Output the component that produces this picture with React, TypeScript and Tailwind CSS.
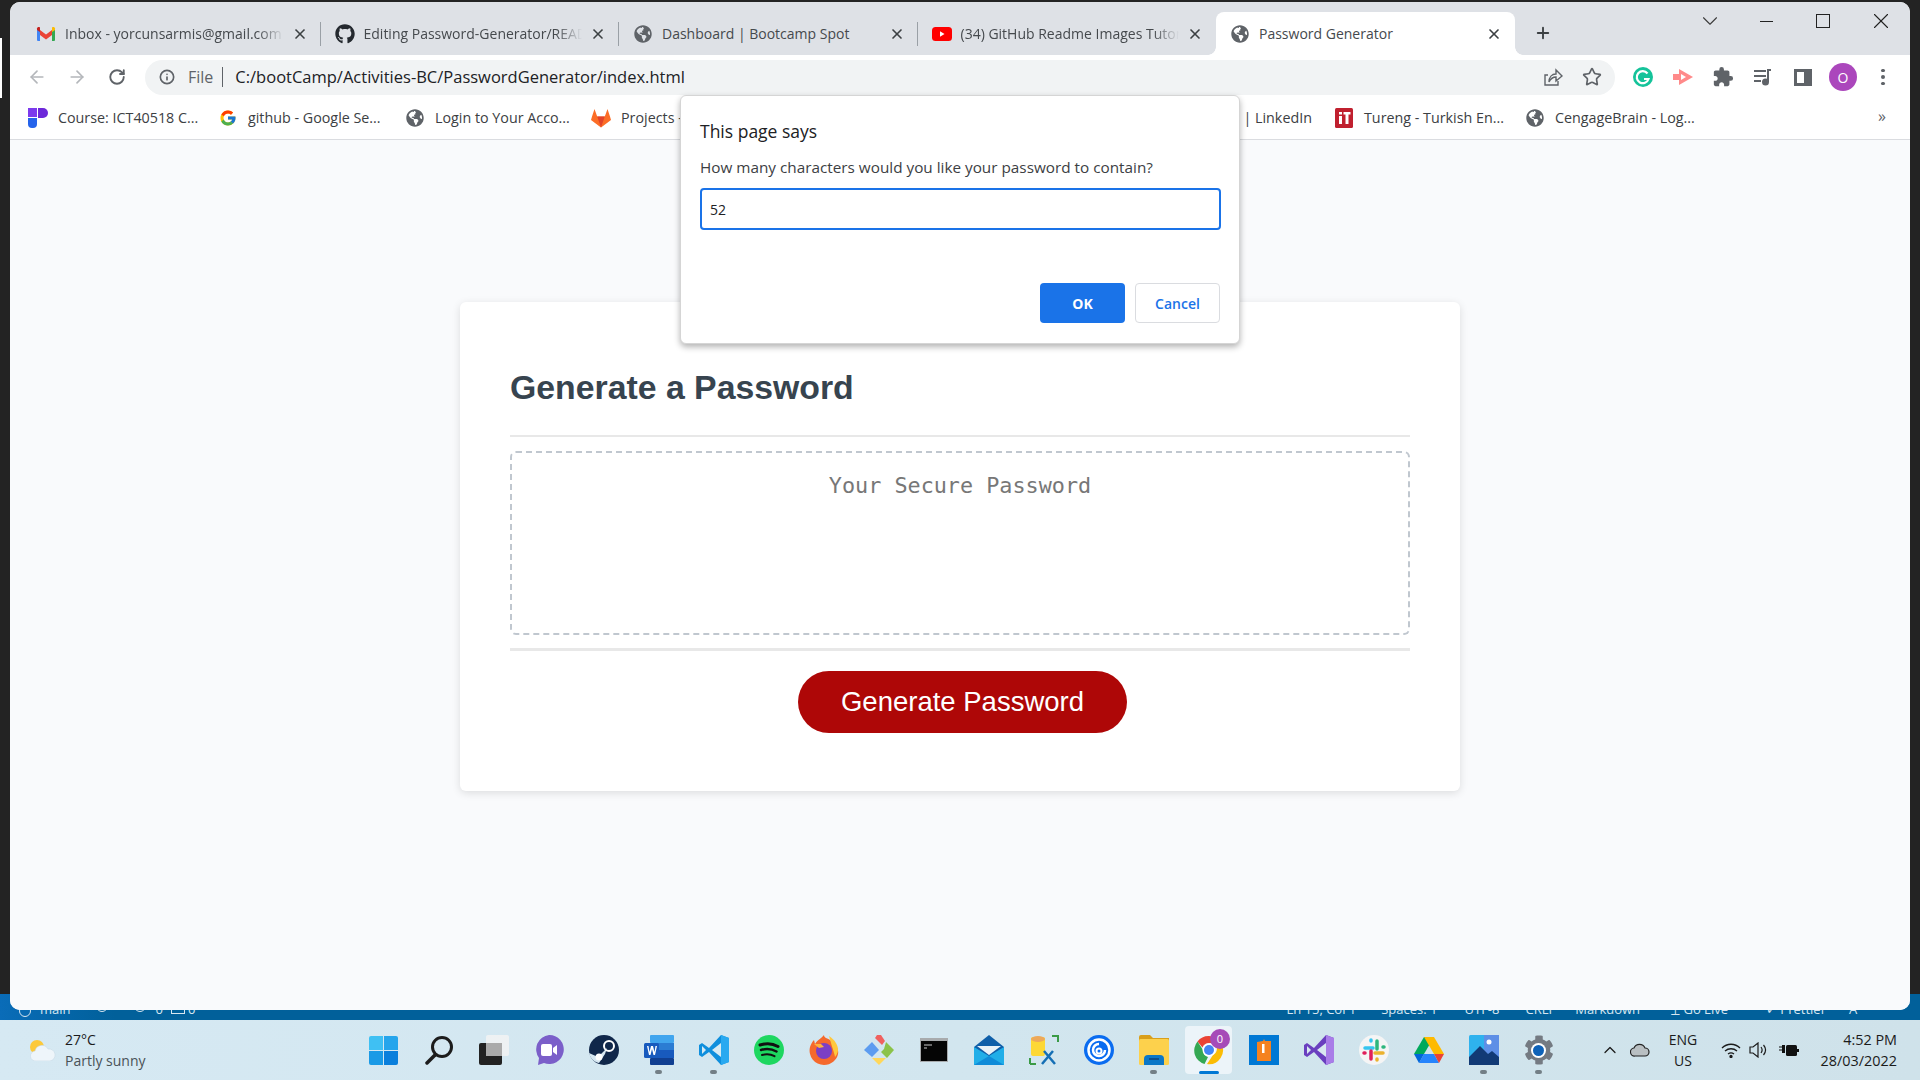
import { ArrowLeft, ArrowRight, ChevronDown, ChevronUp, Info, Plus, RotateCw, Star, X } from "lucide-react";
import type { ReactNode } from "react";
import { FaCog, FaGithub, FaGlobeAmericas } from "react-icons/fa";
import { FcGoogle } from "react-icons/fc";
import { MdExtension } from "react-icons/md";

const Globe = () => <FaGlobeAmericas className="h-[18px] w-[18px] text-[#5f6368]" />;

const GmailIcon = () => (
  <svg viewBox="0 0 20 16" className="h-4 w-5">
    <path d="M1 15V3l3 2v10H2a1 1 0 0 1-1-1Z" fill="#4285f4" />
    <path d="M19 15V3l-3 2v10h2a1 1 0 0 0 1-1Z" fill="#34a853" />
    <path d="M4 9V4L10 8.500 16 4v5l-6 4.500Z" fill="#ea4335" />
    <path d="M1 4V2.500C1 1 2.700.5 3.700 1.200L4 1.500V6Z" fill="#c5221f" />
    <path d="M19 4V2.500C19 1 17.300.5 16.300 1.200L16 1.500V6Z" fill="#fbbc04" />
  </svg>
);

const YoutubeIcon = () => (
  <svg viewBox="0 0 20 14" className="h-[14px] w-5">
    <rect width="20" height="14" rx="3.500" fill="#f00" />
    <path d="M8 4.200v5.600L12.500 7Z" fill="#fff" />
  </svg>
);

const tabs: { title: string; icon: ReactNode; active?: boolean; fade?: boolean; separator?: boolean }[] = [
  { title: "Inbox - yorcunsarmis@gmail.com", icon: <GmailIcon />, fade: true, separator: true },
  { title: "Editing Password-Generator/README.md", icon: <FaGithub className="h-5 w-5 text-[#24292f]" />, fade: true, separator: true },
  { title: "Dashboard | Bootcamp Spot", icon: <Globe />, separator: true },
  { title: "(34) GitHub Readme Images Tutorial", icon: <YoutubeIcon />, fade: true },
  { title: "Password Generator", icon: <Globe />, active: true },
];

function Tab({ title, icon, active, fade, separator }: (typeof tabs)[number]) {
  return (
    <div
      className={`relative flex h-[43px] w-[298.5px] shrink-0 items-center pl-[14px] pr-[13px] ${active ? "rounded-t-lg bg-white" : ""}`}
    >
      <span className="flex w-5 shrink-0 items-center justify-center">{icon}</span>
      <span
        className={`ml-[9px] min-w-0 flex-1 overflow-hidden whitespace-nowrap text-[14px] text-[#45494d] ${fade ? "[mask-image:linear-gradient(to_right,black_88%,transparent)]" : ""}`}
      >
        {title}
      </span>
      <X className="ml-2 h-4 w-4 shrink-0 text-[#3c4043]" strokeWidth={2.5} />
      {separator ? <span className="absolute right-0 top-[10px] h-[24px] w-px bg-[#9aa0a6]" /> : null}
      {active ? (
        <>
          <span className="absolute -left-2 bottom-0 h-2 w-2 bg-[radial-gradient(circle_at_0_0,#dee1e6_7.500px,#fff_8px)]" />
          <span className="absolute -right-2 bottom-0 h-2 w-2 bg-[radial-gradient(circle_at_100%_0,#dee1e6_7.500px,#fff_8px)]" />
        </>
      ) : null}
    </div>
  );
}

function ToolbarSlot({ children }: { children: ReactNode }) {
  return <div className="flex w-10 shrink-0 items-center justify-center">{children}</div>;
}

function Bookmark({ icon, label, textClass }: { icon: ReactNode; label: string; textClass: string }) {
  return (
    <div className="flex shrink-0 items-center">
      <span className="flex w-5 items-center justify-center">{icon}</span>
      <span className={`ml-[10px] whitespace-nowrap text-[14.300px] text-[#3c4043] ${textClass}`}>{label}</span>
    </div>
  );
}

function Chrome() {
  return (
    <div className="flex h-[44px] items-center">
      <div className="flex items-center pl-[7px]">
        <ToolbarSlot><ArrowLeft className="h-5 w-5 text-[#b4b7bb]" strokeWidth={2} /></ToolbarSlot>
        <ToolbarSlot><ArrowRight className="h-5 w-5 text-[#b4b7bb]" strokeWidth={2} /></ToolbarSlot>
        <ToolbarSlot><RotateCw className="h-[18px] w-[18px] text-[#5f6368]" strokeWidth={2.5} /></ToolbarSlot>
      </div>
      <div className="ml-2 flex h-[35px] w-[1470px] items-center rounded-full bg-[#f1f3f4] pl-[14px] pr-[13px]">
        <Info className="h-4 w-4 text-[#5f6368]" strokeWidth={2.5} />
        <span className="ml-[13px] text-[16px] text-[#5f6368]">File</span>
        <span className="ml-[9px] h-[20px] w-px bg-[#5f6368]" />
        <span className="ml-[12px] flex-1 text-[16.500px] text-[#202124]">C:/bootCamp/Activities-BC/PasswordGenerator/index.html</span>
        <svg viewBox="0 0 20 20" className="h-5 w-5 fill-none stroke-[#5f6368] stroke-[1.4]">
          <path d="M5 8H2v10h13v-4" />
          <path d="M6 15c0-5 3-8 7-8V3l6 6-6 5v-4c-3 0-5 1-7 5Z" />
        </svg>
        <Star className="ml-[19px] h-5 w-5 text-[#5f6368]" strokeWidth={2} />
      </div>
      <div className="flex items-center pl-[8px]">
        <ToolbarSlot>
          <svg viewBox="0 0 20 20" className="h-5 w-5">
            <circle cx="10" cy="10" r="10" fill="#15c39a" />
            <path d="M14.500 6.500a6 6 0 1 0 1 5.500h-4.500" fill="none" stroke="#fff" strokeWidth="2.200" />
          </svg>
        </ToolbarSlot>
        <ToolbarSlot>
          <svg viewBox="0 0 20 20" className="h-5 w-5">
            <path d="M0 7h6V2l14 8-14 8v-5H0Z" fill="#ff8a8a" />
            <path d="M8 7v6l5-3Z" fill="#fff" />
          </svg>
        </ToolbarSlot>
        <ToolbarSlot><MdExtension className="h-[22px] w-[22px] text-[#5f6368]" /></ToolbarSlot>
        <ToolbarSlot>
          <svg viewBox="0 0 20 20" className="h-5 w-5 fill-none stroke-[#5f6368] stroke-2">
            <path d="M1 4h12M1 9h12M1 14h7M18 3h-3v12" />
            <circle cx="12.500" cy="15" r="2.500" fill="#5f6368" />
          </svg>
        </ToolbarSlot>
        <ToolbarSlot>
          <div className="flex h-[17px] w-[18px] justify-end border-[3px] border-[#5f6368] bg-white">
            <span className="h-full w-[5px] bg-[#5f6368]" />
          </div>
        </ToolbarSlot>
        <ToolbarSlot>
          <span className="flex h-7 w-7 items-center justify-center rounded-full bg-[#ab47bc] text-[14px] text-white">O</span>
        </ToolbarSlot>
        <ToolbarSlot>
          <span className="flex flex-col gap-[3px]">
            <i className="h-[3.500px] w-[3.500px] rounded-full bg-[#5f6368]" />
            <i className="h-[3.500px] w-[3.500px] rounded-full bg-[#5f6368]" />
            <i className="h-[3.500px] w-[3.500px] rounded-full bg-[#5f6368]" />
          </span>
        </ToolbarSlot>
      </div>
    </div>
  );
}

function BookmarksBar() {
  return (
    <div className="flex h-[41px] items-center border-b border-[#dadce0] pb-[2px] pl-[18px] pr-[24px]">
      <Bookmark
        icon={
          <svg viewBox="0 0 20 20" className="h-5 w-5">
            <path d="M0 0h9v9H0Z" fill="#7c3aed" />
            <path d="M10 0h5a5 5 0 0 1 0 10h-5Z" fill="#6d28d9" />
            <path d="M0 10h9v6a4 4 0 0 1-4 4H4a4 4 0 0 1-4-4Z" fill="#2563eb" />
          </svg>
        }
        label="Course: ICT40518 C..."
        textClass="w-[160px]"
      />
      <Bookmark icon={<FcGoogle className="h-[18px] w-[18px]" />} label="github - Google Se..." textClass="w-[157px]" />
      <Bookmark icon={<Globe />} label="Login to Your Acco..." textClass="w-[156px]" />
      <Bookmark
        icon={
          <svg viewBox="0 0 20 19" className="h-[19px] w-5">
            <path d="M10 18.500 0 11l1-3.500L3.500 0l2.700 7.500h7.600L16.500 0 19 7.500l1 3.500Z" fill="#fc6d26" />
            <path d="M10 18.500 6.200 7.500h7.600Z" fill="#e24329" />
          </svg>
        }
        label="Projects - Dashboard"
        textClass="w-[610px]"
      />
      <span className="w-[103px] shrink-0 whitespace-nowrap text-[14.300px] text-[#3c4043]">d | LinkedIn</span>
      <Bookmark
        icon={
          <svg viewBox="0 0 18 20" className="h-5 w-[18px]">
            <rect width="18" height="20" rx="1.500" fill="#c0202f" />
            <path d="M4 8h3v8H4ZM4 4h3v2.500H4ZM8.500 4h7v2.500h-2V16h-3V6.500h-2Z" fill="#fff" />
          </svg>
        }
        label="Tureng - Turkish En..."
        textClass="w-[161px]"
      />
      <Bookmark icon={<Globe />} label="CengageBrain - Log..." textClass="w-[145px]" />
      <span className="mb-1 ml-auto text-[16px] leading-none text-[#5f6368]">»</span>
    </div>
  );
}

function PasswordCard() {
  return (
    <div className="h-[489px] w-[1000px] rounded-md bg-white px-[50px] pt-[64px] shadow-[0_2px_8px_rgba(0,0,0,0.12)]">
      <h2 className="mb-[27px] font-['Liberation_Sans',sans-serif] text-[33.800px] font-bold leading-[42px] text-[#37444f]">
        Generate a Password
      </h2>
      <div className="h-[2px] bg-[#e8e8e8]" />
      <div className="mt-[14px] h-[184px] rounded-md border-2 border-dashed border-[#c0c7cf] pt-[20px] text-center font-['DejaVu_Sans_Mono',monospace] text-[21.800px] leading-[26px] text-[#777]">
        Your Secure Password
      </div>
      <div className="mt-[13px] h-[3px] bg-[#e8e8e8]" />
      <div className="ml-[5px] mt-[20px] flex justify-center">
        <button className="h-[62px] w-[329px] rounded-[31px] bg-[#ae0707] font-['Liberation_Sans',sans-serif] text-[27.500px] text-white">
          Generate Password
        </button>
      </div>
    </div>
  );
}

function PromptDialog() {
  return (
    <div className="absolute left-[670px] top-[93px] z-20 h-[249px] w-[560px] rounded-md border border-[#d5d5d5] bg-white px-[19px] pt-[22px] shadow-[0_3px_6px_rgba(0,0,0,0.3)]">
      <p className="text-[17.500px] leading-[26px] text-[#202124]">This page says</p>
      <p className="mt-[13px] text-[15.300px] leading-5 text-[#3c4043]">How many characters would you like your password to contain?</p>
      <div className="mt-[11px] flex h-[42px] w-[521px] items-center rounded-[4px] border-2 border-[#1a73e8] pl-[8px] text-[14px] text-[#202124]">
        52
      </div>
      <div className="mt-[53px] flex justify-end gap-[10px]">
        <button className="h-[40px] w-[85px] rounded-[4px] bg-[#1a73e8] text-[14px] font-bold text-white">OK</button>
        <button className="h-[40px] w-[85px] rounded-[4px] border border-[#dadce0] bg-white text-[14px] font-semibold text-[#1a73e8]">Cancel</button>
      </div>
    </div>
  );
}

const Dot = ({ className }: { className: string }) => (
  <span className={`absolute top-[6px] h-[12px] w-[12px] rounded-full border border-[#d7e6f0] ${className}`} />
);

function StatusBar() {
  return (
    <div className="relative -mt-[16px] flex h-[26px] items-start bg-gradient-to-r from-[#0a6cb8] from-0% via-[#01609a] via-[6%] to-[#01609a] pt-[8px] font-['Open_Sans',sans-serif] text-[13px] leading-[14px] text-[#d7e6f0]">
      <Dot className="left-[19px] !top-[11px] h-[6px] w-[6px]" />
      <span className="ml-[40px]">main</span>
      <Dot className="left-[96px]" />
      <Dot className="left-[134px]" />
      <span className="ml-[85px]">0</span>
      <span className="ml-[8px] mt-[2px] h-[10px] w-[14px] border border-[#d7e6f0]" />
      <span className="ml-[3px]">0</span>
      <span className="ml-[1091px]">Ln 15, Col 1</span>
      <span className="ml-[25px]">Spaces: 1</span>
      <span className="ml-[27px]">UTF-8</span>
      <span className="ml-[26px]">CRLF</span>
      <span className="ml-[20px]">Markdown</span>
      <span className="ml-[31px]">⟂ Go Live</span>
      <span className="ml-[38px]">✓ Prettier</span>
      <span className="ml-[23px]">A</span>
    </div>
  );
}

const taskIcons: { key: string; svg: ReactNode; dot?: boolean; active?: boolean }[] = [
  {
    key: "start",
    svg: (
      <svg viewBox="0 0 29 29" className="h-[29px] w-[29px]">
        <path d="M0 2a2 2 0 0 1 2-2h12v14H0Z" fill="#3fc0f3" />
        <path d="M15 0h12a2 2 0 0 1 2 2v12H15Z" fill="#25a5ec" />
        <path d="M0 15h14v14H2a2 2 0 0 1-2-2Z" fill="#1a9ae6" />
        <path d="M15 15h14v12a2 2 0 0 1-2 2H15Z" fill="#0a7fdc" />
      </svg>
    ),
  },
  {
    key: "search",
    svg: (
      <svg viewBox="0 0 30 30" className="h-[30px] w-[30px] fill-none stroke-[#1c1c1c]">
        <circle cx="18" cy="12" r="9.500" strokeWidth="3" />
        <path d="M11 20 3 28" strokeWidth="3.500" strokeLinecap="round" />
      </svg>
    ),
  },
  {
    key: "taskview",
    svg: (
      <svg viewBox="0 0 30 30" className="h-[30px] w-[30px]">
        <rect x="0" y="8" width="23" height="22" rx="2" fill="#222" />
        <rect x="7" y="0" width="23" height="21" rx="2" fill="#f4f4f4" fillOpacity="0.8" />
        <rect x="7" y="8" width="16" height="13" fill="#aaa" />
      </svg>
    ),
  },
  {
    key: "chat",
    svg: (
      <svg viewBox="0 0 30 30" className="h-[30px] w-[30px]">
        <path d="M15 0a14.500 14.500 0 1 1-5 28l-6 2 1-7A14.500 14.500 0 0 1 15 0Z" fill="#7b5fc9" />
        <rect x="7" y="9" width="11" height="12" rx="2" fill="#fff" />
        <path d="m19 13 4-3v10l-4-3Z" fill="#fff" />
      </svg>
    ),
  },
  {
    key: "steam",
    svg: (
      <svg viewBox="0 0 30 30" className="h-[30px] w-[30px]">
        <circle cx="15" cy="15" r="15" fill="#10274a" />
        <path d="M0 18l9 4 9-9-2 6-6 9C5 27 1 23 0 18Z" fill="#d7e8f2" />
        <circle cx="20" cy="11" r="5" fill="none" stroke="#fff" strokeWidth="2" />
        <circle cx="10" cy="22" r="3.500" fill="#fff" />
      </svg>
    ),
  },
  {
    key: "word",
    dot: true,
    svg: (
      <svg viewBox="0 0 30 30" className="h-[30px] w-[30px]">
        <rect x="6" y="0" width="24" height="8" rx="1" fill="#41a5ee" />
        <rect x="6" y="8" width="24" height="7" fill="#2b7cd3" />
        <rect x="6" y="15" width="24" height="8" fill="#185abd" />
        <rect x="6" y="23" width="24" height="7" rx="1" fill="#103f91" />
        <rect x="0" y="8" width="15" height="15" rx="1.500" fill="#185abd" />
        <path d="m3 11 2 9h1.500L8 14l1.500 6H11l2-9h-1.500l-1 6L9 11H7l-1.500 6-1-6Z" fill="#fff" />
      </svg>
    ),
  },
  {
    key: "vscode",
    dot: true,
    svg: (
      <svg viewBox="0 0 30 30" className="h-[30px] w-[30px]">
        <path d="M22 0 10 13 3 8 0 10v10l3 2 7-5 12 13 8-3V3Z" fill="#0f8fdd" />
        <path d="M22 0 30 3v24l-8 3Z" fill="#29a9f0" />
        <path d="M22 8v14l-9-7Z" fill="#d7eaf3" />
        <path d="m3 11 4 4-4 4Z" fill="#d7eaf3" />
      </svg>
    ),
  },
  {
    key: "spotify",
    svg: (
      <svg viewBox="0 0 30 30" className="h-[30px] w-[30px] fill-none stroke-[#111]">
        <circle cx="15" cy="15" r="15" fill="#1ed760" stroke="none" />
        <path d="M6 10c6-2 13-1.500 18 1.500" strokeWidth="3" strokeLinecap="round" />
        <path d="M7 15c5-1.500 11-1 15.500 1.500" strokeWidth="2.500" strokeLinecap="round" />
        <path d="M8 20c4-1 9-.7 12.500 1.200" strokeWidth="2" strokeLinecap="round" />
      </svg>
    ),
  },
  {
    key: "firefox",
    svg: (
      <svg viewBox="0 0 30 30" className="h-[30px] w-[30px]">
        <path d="M15 30A14.500 14.500 0 0 1 1 12c1-3 2-5 4-7l1 4c2-4 6-5 9-9 0 3 3 3 6 5 6 4 9 9 8 14-1 6-7 11-14 11Z" fill="#f5692c" />
        <path d="M20 1c6 4 9 9 9 14 0 3-2 6-3 7-1-5-3-10-6-21Z" fill="#ffc83d" />
        <circle cx="15" cy="16" r="8" fill="#7b3fc4" />
        <path d="M5 9h7l3 3-5 1Z" fill="#ffb13c" />
      </svg>
    ),
  },
  {
    key: "gitkraken",
    svg: (
      <svg viewBox="0 0 30 30" className="h-[30px] w-[30px]">
        <path d="M13 0h4l4 6-3 4-7-7Z" fill="#f0615f" />
        <path d="M8 7 0 15l8 7 7-7Z" fill="#5c9cf0" />
        <path d="M22 7l8 8-7 8-6-6 3-3Z" fill="#8bc34a" />
        <path d="M8 23h14l-7 7Z" fill="#ffd75a" />
      </svg>
    ),
  },
  {
    key: "terminal",
    svg: (
      <svg viewBox="0 0 28 24" className="h-6 w-7">
        <rect width="28" height="24" fill="#a8abad" />
        <rect x="1" y="3" width="26" height="20" fill="#050505" />
        <path d="M4 7h8M4 10h3" stroke="#ccc" strokeWidth="1.200" />
      </svg>
    ),
  },
  {
    key: "mail",
    svg: (
      <svg viewBox="0 0 30 30" className="h-[30px] w-[30px]">
        <path d="M15 0 30 12v18H0V12Z" fill="#0f5fa9" />
        <path d="M3 11h24l-12 9Z" fill="#e9f2f8" />
        <path d="M0 12l15 9 15-9v18H0Z" fill="#21aee8" />
        <path d="M0 30 15 21l15 9Z" fill="#0f8bd8" />
      </svg>
    ),
  },
  {
    key: "sqltool",
    svg: (
      <svg viewBox="0 0 30 30" className="h-[30px] w-[30px]">
        <rect x="2" y="2" width="14" height="19" rx="2" fill="#fdd835" />
        <ellipse cx="9" cy="4" rx="7" ry="3" fill="#eda95a" />
        <path d="M23 1h6v6M1 29v-6M1 29h6" fill="none" stroke="#3a9b46" strokeWidth="2" />
        <path d="m13 29 11-13M26 29 15 16" stroke="#156fb5" strokeWidth="2.500" />
      </svg>
    ),
  },
  {
    key: "uplay",
    svg: (
      <svg viewBox="0 0 30 30" className="h-[30px] w-[30px] fill-none stroke-white">
        <circle cx="15" cy="15" r="15" fill="#0a6cf0" stroke="none" />
        <circle cx="15" cy="15" r="10.500" strokeWidth="2.500" />
        <path d="M21 15a6 6 0 1 1-6-6" strokeWidth="2.500" />
        <circle cx="15" cy="16" r="2.500" strokeWidth="2" />
      </svg>
    ),
  },
  {
    key: "explorer",
    dot: true,
    svg: (
      <svg viewBox="0 0 30 30" className="h-[30px] w-[30px]">
        <path d="M0 2a2 2 0 0 1 2-2h9l3 3h16v5H0Z" fill="#d99f1b" />
        <rect y="4" width="30" height="26" rx="1.500" fill="#fdd14c" />
        <path d="M5 30v-6a4 4 0 0 1 4-4h12a4 4 0 0 1 4 4v6Z" fill="#0b77c7" />
        <rect x="10" y="23" width="10" height="2" fill="#0a4f8f" />
      </svg>
    ),
  },
  {
    key: "chrome",
    active: true,
    svg: (
      <svg viewBox="0 0 30 30" className="h-[30px] w-[30px]">
        <path d="M15 1a14 14 0 0 1 12 7H15a7 7 0 0 0-6.500 4.500L3.500 6.500A14 14 0 0 1 15 1Z" fill="#ea4335" />
        <path d="M3.500 6.500 9 15a7 7 0 0 0 5 7l-3.500 7A14 14 0 0 1 3.500 6.500Z" fill="#34a853" />
        <path d="M27 8a14 14 0 0 1-14 21l6-9a7 7 0 0 0 1-12Z" fill="#fbbc04" />
        <circle cx="15" cy="15" r="6.500" fill="#fff" />
        <circle cx="15" cy="15" r="5" fill="#4285f4" />
      </svg>
    ),
  },
  {
    key: "book",
    svg: (
      <svg viewBox="0 0 30 30" className="h-[30px] w-[30px]">
        <rect width="30" height="30" fill="#0078d4" />
        <path d="M8 7l6-1 1-2 1 2h6v20H8Z" fill="#f58220" />
        <rect x="13" y="9" width="2.500" height="9" fill="#fff" />
      </svg>
    ),
  },
  {
    key: "vstudio",
    svg: (
      <svg viewBox="0 0 30 30" className="h-[30px] w-[30px]">
        <path d="M22 0 10 13 3 8 0 10v10l3 2 7-5 12 13 8-3V3Z" fill="#6a3fbf" />
        <path d="M22 0 30 3v24l-8 3Z" fill="#a97de8" />
        <path d="M22 8v14l-9-7Z" fill="#d9e8f0" />
        <path d="m3 11 4 4-4 4Z" fill="#d9e8f0" />
      </svg>
    ),
  },
  {
    key: "slack",
    svg: (
      <svg viewBox="0 0 30 30" className="h-[30px] w-[30px] stroke-[3.500]" strokeLinecap="round">
        <circle cx="15" cy="15" r="15" fill="#f5f5f5" stroke="none" />
        <path d="M6 13h8M12 5v1" stroke="#36c5f0" fill="none" />
        <path d="M18 6v8M24 12h1" stroke="#2eb67d" fill="none" />
        <path d="M16 18h8M18 24v1" stroke="#ecb22e" fill="none" />
        <path d="M12 16v8M5 18h1" stroke="#e01e5a" fill="none" />
      </svg>
    ),
  },
  {
    key: "drive",
    svg: (
      <svg viewBox="0 0 30 26" className="h-[26px] w-[30px]">
        <path d="M10 0h10L10 17H0Z" fill="#00a95c" />
        <path d="M10 0h10l10 17H20Z" fill="#ffba00" />
        <path d="M5 26 10 17h10l5 9Z" fill="#2684fc" />
        <path d="M0 17h10l-5 9Z" fill="#0066da" />
        <path d="M20 17h10l-5 9Z" fill="#ea4335" />
      </svg>
    ),
  },
  {
    key: "photos",
    dot: true,
    svg: (
      <svg viewBox="0 0 30 30" className="h-[30px] w-[30px]">
        <rect width="30" height="30" rx="1.500" fill="#2fb2ee" />
        <path d="M15 0h15v30H15Z" fill="#5e8fe6" />
        <circle cx="20" cy="7" r="2.500" fill="#fff" />
        <path d="M0 22 11 11l8 8 4-3 7 6v8H0Z" fill="#123a75" />
      </svg>
    ),
  },
  {
    key: "settings",
    dot: true,
    svg: (
      <div className="relative flex h-[30px] w-[30px] items-center justify-center">
        <FaCog className="h-[30px] w-[30px] text-[#747a82]" />
        <span className="absolute h-[11px] w-[11px] rounded-full bg-[#0f62b8] ring-2 ring-white" />
      </div>
    ),
  },
];

function Taskbar() {
  return (
    <div className="flex h-[60px] items-center bg-gradient-to-r from-[#d6e9f3] via-[#d2e6ef] to-[#cfe2ea] font-['Open_Sans',sans-serif]">
      <div className="flex w-[356px] shrink-0 items-center pl-[28px]">
        <svg viewBox="0 0 28 22" className="h-[22px] w-7">
          <circle cx="9" cy="8" r="7" fill="#fcc93a" />
          <path d="M8 22a5 5 0 0 1-1-10 7 7 0 0 1 13-2 6 6 0 0 1 2 12Z" fill="#eef5fa" stroke="#c3d6e2" strokeWidth="0.500" />
        </svg>
        <div className="ml-[9px] text-[14px] leading-[21px] text-[#1b1b1b]">
          <p>27°C</p>
          <p className="text-[#4a5257]">Partly sunny</p>
        </div>
      </div>
      <div className="flex shrink-0">
        {taskIcons.map((t) => (
          <div key={t.key} className="relative flex h-[60px] w-[55px] items-center justify-center">
            {t.active ? <span className="absolute left-[4px] top-[6px] h-[48px] w-[47px] rounded-[4px] bg-[#ecf4f9]" /> : null}
            <span className="relative">{t.svg}</span>
            {t.dot ? <span className="absolute bottom-[6px] h-1 w-[7px] rounded-full bg-[#737f86]" /> : null}
            {t.active ? (
              <>
                <span className="absolute bottom-[6px] h-[3px] w-[20px] rounded-full bg-[#0078d4]" />
                <span className="absolute left-[29px] top-[9px] flex h-5 w-5 items-center justify-center rounded-full bg-[#a64bb8] text-[11px] text-white">0</span>
              </>
            ) : null}
          </div>
        ))}
      </div>
      <div className="ml-auto flex items-center pr-[23px] text-[#1b1b1b]">
        <ChevronUp className="h-5 w-5" strokeWidth={1.500} />
        <svg viewBox="0 0 20 14" className="ml-[10px] h-[14px] w-5">
          <path d="M5 13a4 4 0 0 1-1-8 6 6 0 0 1 11 0 4 4 0 0 1 0 8Z" fill="#b9bfc2" stroke="#222" strokeWidth="1.200" />
        </svg>
        <div className="ml-[17px] w-[32px] text-center text-[14px] leading-[21px]">
          ENG
          <br />
          US
        </div>
        <svg viewBox="0 0 20 16" className="ml-[22px] h-4 w-5 fill-none stroke-[#1b1b1b] stroke-[1.300]">
          <path d="M1 6c5-5 13-5 18 0M4 9c3.500-3 8.500-3 12 0M7 12c2-1.500 4-1.500 6 0" />
          <circle cx="10" cy="14.500" r="1" fill="#1b1b1b" />
        </svg>
        <svg viewBox="0 0 20 16" className="ml-[8px] h-4 w-5 fill-none stroke-[#1b1b1b] stroke-[1.200]">
          <path d="M1 5h3l5-4v14l-5-4H1Z" />
          <path d="M12 5c1.500 2 1.500 4 0 6M14.500 3c2.500 3 2.500 7 0 10" />
        </svg>
        <svg viewBox="0 0 20 14" className="ml-[10px] h-[14px] w-5">
          <path d="M0 4h3M0 7h3" stroke="#111" strokeWidth="1.200" />
          <path d="M3 2h3v8H3Z" fill="#111" />
          <rect x="7" y="2" width="11" height="11" rx="1.500" fill="#111" />
          <rect x="18" y="6" width="2" height="3" fill="#111" />
        </svg>
        <div className="ml-[18px] w-[80px] whitespace-nowrap text-right text-[14.400px] leading-[21px]">
          4:52 PM
          <br />
          28/03/2022
        </div>
      </div>
    </div>
  );
}

export default function App() {
  return (
    <div className="relative flex h-[1080px] w-[1920px] flex-col overflow-hidden bg-[#232323] pt-[2px] font-['Open_Sans',sans-serif]">
      <span className="absolute left-0 top-[38px] h-[60px] w-[2px] bg-white" />
      <div className="relative z-10 ml-[10px] flex h-[1008px] w-[1900px] flex-col overflow-hidden rounded-[10px] bg-white">
        <div className="flex h-[53px] items-end bg-[#dee1e6] pl-3">
          {tabs.map((tab) => (
            <Tab key={tab.title} {...tab} />
          ))}
          <Plus className="mb-[13px] ml-[19px] h-[18px] w-[18px] text-[#3c4043]" strokeWidth={2.500} />
          <div className="ml-auto flex h-[38px] items-center self-start pr-[16px] text-[#222]">
            <ChevronDown className="mr-[37px] h-[26px] w-[26px] text-[#3c3c3c]" strokeWidth={1} />
            <span className="mr-[43px] h-px w-[13px] bg-[#222]" />
            <span className="mr-[38px] h-[14px] w-[14px] border border-[#222]" />
            <X className="h-[26px] w-[26px]" strokeWidth={1} />
          </div>
        </div>
        <Chrome />
        <BookmarksBar />
        <main className="flex flex-1 items-start justify-center bg-[#f9fafc] pt-[162px]">
          <PasswordCard />
        </main>
        <PromptDialog />
      </div>
      <StatusBar />
      <Taskbar />
    </div>
  );
}
